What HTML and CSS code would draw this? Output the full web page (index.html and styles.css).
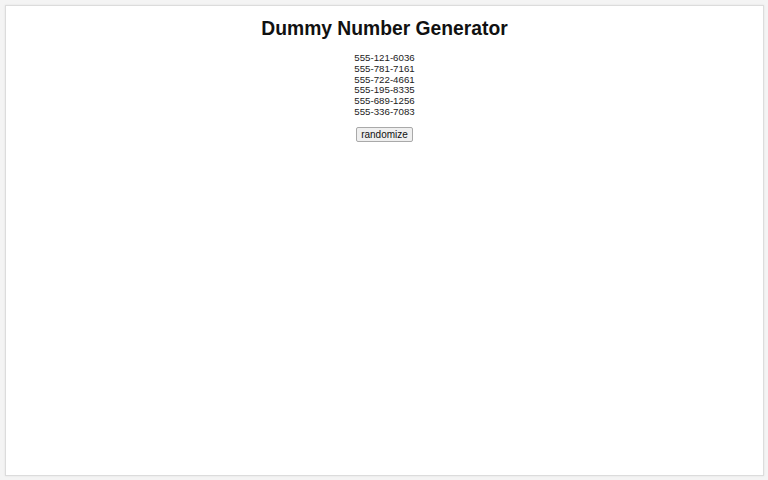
FILE: index.html
```html
<!DOCTYPE html>
<html>
<head>
<meta charset="utf-8">
<link rel="stylesheet" href="styles.css">
</head>
<body>
<div class="panel">
  <h1 class="title">Dummy Number Generator</h1>
  <div class="numbers">
    <div>555-121-6036</div>
    <div>555-781-7161</div>
    <div>555-722-4661</div>
    <div>555-195-8335</div>
    <div>555-689-1256</div>
    <div>555-336-7083</div>
  </div>
  <button class="btn">randomize</button>
</div>
</body>
</html>
```
FILE: styles.css
```css
html, body {
  margin: 0;
  padding: 0;
  background: #f4f4f4;
  font-family: "Liberation Sans", Arial, sans-serif;
}
body {
  padding: 5px 0 0 5px;
  height: 480px;
  box-sizing: border-box;
}
.panel {
  background: #ffffff;
  border: 1px solid #dcdcdc;
  width: 759px;
  height: 471px;
  box-sizing: border-box;
  display: flex;
  flex-direction: column;
  align-items: center;
  box-shadow: 0 0 2px rgba(0,0,0,0.08);
}
.title {
  margin: 13px 0 0 0;
  font-size: 19.3px;
  font-weight: bold;
  color: #111;
  line-height: 20px;
}
.numbers {
  margin-top: 14px;
  font-size: 9.7px;
  line-height: 10.8px;
  color: #222;
  text-align: center;
}
.btn {
  margin-top: 9px;
  font-family: "Liberation Sans", Arial, sans-serif;
  font-size: 10px;
  padding: 1px 4px;
  height: 15px;
  line-height: 11px;
  background: #efefef;
  border: 1px solid #a9a9a9;
  border-radius: 2px;
  color: #111;
}
```
